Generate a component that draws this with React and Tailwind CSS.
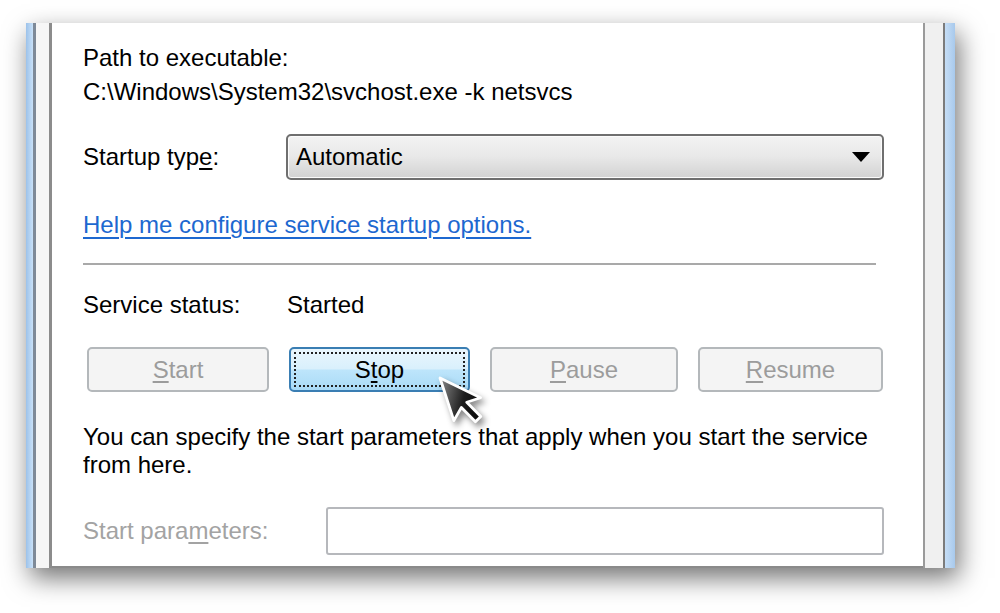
import React from "react";

// Windows 7 service properties (zoomed screenshot) — General tab, lower half
const FONT = "font-['Liberation_Sans',Arial,sans-serif]";

function U({ children }) {
  return <span className="underline underline-offset-[3px] decoration-[2px]">{children}</span>;
}

function DisabledButton({ width, children }) {
  return (
    <button
      disabled
      className={`${width} h-[45px] rounded-[5px] border-2 border-[#b4b8bb] bg-[#f4f4f4] text-[24px] text-[#9c9c9c]`}
    >
      {children}
    </button>
  );
}

function Cursor() {
  return (
    <svg
      className="absolute left-[435px] top-[374px] drop-shadow-[3px_4px_3px_rgba(0,0,0,0.45)]"
      width="60"
      height="66"
      viewBox="0 0 60 66"
    >
      <defs>
        <linearGradient id="cur" x1="0" y1="0" x2="1" y2="1">
          <stop offset="0" stopColor="#8a8a8a" />
          <stop offset="0.5" stopColor="#1e1e1e" />
          <stop offset="1" stopColor="#000" />
        </linearGradient>
      </defs>
      <g transform="translate(5 4) rotate(-18 0 0) scale(1.12)">
        <path
          d="M0 0 L0 40 L10 31 L18 47 L24 44 L16 28 L29 28 Z"
          fill="url(#cur)"
          stroke="#fff"
          strokeWidth="2.5"
          strokeLinejoin="round"
        />
      </g>
    </svg>
  );
}

export default function App() {
  return (
    <div className={`relative w-[1000px] h-[613px] bg-white overflow-hidden ${FONT}`}>
      <div className="pt-[23px] pl-[26px]">
        <div className="flex w-[929px] h-[545px] shadow-[4px_10px_24px_rgba(0,0,0,0.55)]">
          {/* left frame */}
          <div className="w-[7px] bg-gradient-to-r from-[#9cc2ea] to-[#c9e1f8]" />
          <div className="w-[3px] bg-[#7e8a98]" />
          <div className="w-[13px] bg-[#f6f6f6]" />
          <div className="w-[3px] bg-[#8c8c8c]" />

          {/* panel */}
          <div className="flex-1 bg-white border-b-2 border-[#8a8a8a] pt-[18px] pl-[31px] pr-[39px] text-[24px] text-black">
            <div className="leading-[34px]">Path to executable:</div>
            <div className="leading-[34px]">C:\Windows\System32\svchost.exe -k netsvcs</div>

            <div className="mt-[25px] flex items-center">
              <div className="w-[203px]">
                Startup typ<U>e</U>:
              </div>
              <div className="flex-1 h-[46px] rounded-[5px] border-2 border-[#6f6f6f] bg-gradient-to-b from-[#f3f3f3] via-[#e8e8e8] to-[#d2d2d2] shadow-[inset_0_0_0_1px_#fbfbfb] flex items-center pl-[8px] pr-[12px]">
                <span className="flex-1">Automatic</span>
                <svg width="18" height="10" viewBox="0 0 18 10">
                  <path d="M0 0 L18 0 L9 10 Z" fill="#000" />
                </svg>
              </div>
            </div>

            <div className="mt-[28px] leading-[34px]">
              <span className="text-[#1d68d0] underline underline-offset-[4px] decoration-[2px]">
                Help me configure service startup options.
              </span>
            </div>

            <div className="mt-[21px] mr-[8px] h-[2px] bg-[#a9a9a9]" />

            <div className="mt-[23px] flex leading-[34px]">
              <div className="w-[204px]">Service status:</div>
              <div>Started</div>
            </div>

            <div className="mt-[25px] ml-[4px] flex gap-[20px]">
              <DisabledButton width="w-[182px]">
                <U>S</U>tart
              </DisabledButton>
              <button className="w-[181px] h-[45px] rounded-[5px] border-2 border-[#3a7eb3] bg-[linear-gradient(to_bottom,#eaf6fd_0%,#d9f0fc_48%,#bde5fb_52%,#a9daf6_100%)] p-[3px]">
                <div className="h-full border-2 border-dotted border-[#222] flex items-center justify-center text-[24px]">
                  <span>
                    S<U>t</U>op
                  </span>
                </div>
              </button>
              <DisabledButton width="w-[188px]">
                <U>P</U>ause
              </DisabledButton>
              <DisabledButton width="w-[185px]">
                <U>R</U>esume
              </DisabledButton>
            </div>

            <div className="mt-[31px] leading-[28px]">
              You can specify the start parameters that apply when you start the service
              <br />
              from here.
            </div>

            <div className="mt-[28px] flex items-center">
              <div className="w-[243px] text-[#a3a3a3]">
                Start para<U>m</U>eters:
              </div>
              <div className="flex-1 h-[48px] rounded-[3px] border-2 border-[#b6b8bc] bg-white" />
            </div>
          </div>

          {/* right frame */}
          <div className="w-[2px] bg-[#9a9a9a]" />
          <div className="w-[18px] bg-[#f0f0f0]" />
          <div className="w-[2px] bg-[#7c7c7c]" />
          <div className="w-[10px] bg-gradient-to-r from-[#c6def6] to-[#a8c9ec]" />
        </div>
      </div>
      <Cursor />
    </div>
  );
}
